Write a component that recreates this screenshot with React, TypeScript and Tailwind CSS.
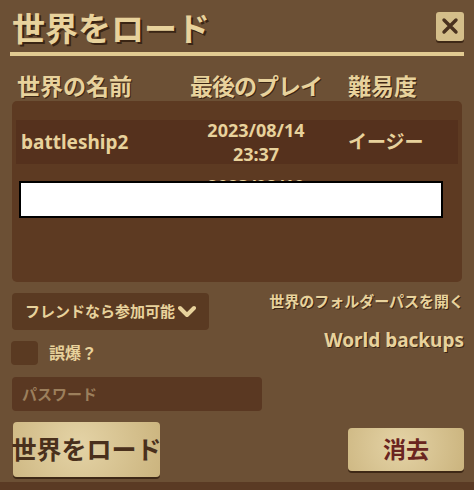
import React from 'react'

const font = { fontFamily: '"Noto Sans", "Noto Sans CJK JP", sans-serif' }

interface WorldRow {
  name: string
  date: string
  time: string
  difficulty: string
}

const worlds: WorldRow[] = [
  { name: 'battleship2', date: '2023/08/14', time: '23:37', difficulty: 'イージー' },
  { name: 'world', date: '2023/08/10', time: '21:12', difficulty: 'イージー' },
]

function CloseButton() {
  return (
    <button className="w-[28px] h-[29px] rounded-[3px] bg-[#d4be8a] shadow-[0_2px_0_#3e2816] flex items-center justify-center">
      <svg width="18" height="18" viewBox="0 0 18 18">
        <path d="M3 3 L15 15 M15 3 L3 15" stroke="#4a321f" strokeWidth="3.4" strokeLinecap="round" />
      </svg>
    </button>
  )
}

function Row({ world, highlight }: { world: WorldRow; highlight?: boolean }) {
  return (
    <div className={`flex items-center h-[44px] px-[5px] ${highlight ? 'bg-[#55311d]' : ''}`}>
      <div className="w-[165px] text-[19px] font-bold">{world.name}</div>
      <div className="w-[140px] text-center text-[18px] font-bold leading-[24px]">
        <div>{world.date}</div>
        <div>{world.time}</div>
      </div>
      <div className="ml-[22px] text-[19px] font-bold">{world.difficulty}</div>
    </div>
  )
}

export default function App() {
  return (
    <div
      className="w-[474px] h-[490px] bg-[#6c5035] relative overflow-hidden flex flex-col text-[#e8d29c]"
      style={font}
    >
      {/* Title */}
      <div className="flex items-center justify-between pl-[12px] pr-[10px] h-[52px]">
        <h1 className="text-[33px] font-bold leading-none [text-shadow:2px_2px_0_#3a2514] pt-[4px]">世界をロード</h1>
        <CloseButton />
      </div>
      <div className="mx-[10px] h-[4px] bg-[#e2cb92]" />

      {/* Column headers */}
      <div className="flex items-center px-[17px] mt-[15px] h-[30px] text-[23px] font-bold leading-none whitespace-nowrap [text-shadow:1px_1px_0_#3a2514]">
        <div className="w-[169px]">世界の名前</div>
        <div className="w-[140px] text-center tracking-[-1px]">最後のプレイ</div>
        <div className="ml-[22px]">難易度</div>
      </div>

      {/* World list */}
      <div className="mx-[12px] h-[181px] bg-[#5d3a22] rounded-[5px] pt-[19px] px-[4px] overflow-hidden">
        <Row world={worlds[0]} highlight />
        <div className="mt-[12px]">
          <Row world={worlds[1]} />
        </div>
      </div>
      <div className="absolute left-[19px] top-[181px] w-[424px] h-[37px] bg-white border-2 border-black" />

      {/* Options */}
      <div className="flex justify-between pl-[12px] pr-[10px] mt-[9px]">
        <div className="flex flex-col">
          <button className="mt-[2px] w-[197px] h-[37px] bg-[#5a3a22] rounded-[4px] flex items-center pl-[13px] text-[15px] font-bold">
            フレンドなら参加可能
            <svg width="18" height="14" viewBox="0 0 18 14" className="ml-[3px]">
              <path d="M2 3 L9 10 L16 3" stroke="#e8d29c" strokeWidth="4" fill="none" strokeLinejoin="round" strokeLinecap="round" />
            </svg>
          </button>
          <div className="flex items-center mt-[11px]">
            <div className="w-[27px] h-[24px] bg-[#5a3a22] rounded-[4px] -ml-[1px]" />
            <span className="ml-[11px] text-[16px] font-bold">誤爆？</span>
          </div>
          <input
            className="mt-[12px] w-[250px] h-[34px] bg-[#5a3822] rounded-[4px] pl-[10px] text-[15px] font-bold outline-none placeholder:text-[#9c7f5c]"
            placeholder="パスワード"
            style={font}
          />
        </div>
        <div className="flex flex-col items-end">
          <span className="text-[15px] font-bold leading-[20px] [text-shadow:1px_1px_0_#3a2514]">世界のフォルダーパスを開く</span>
          <span className="mt-[16px] text-[19px] font-bold leading-[26px] [text-shadow:1px_1px_0_#3a2514]">World backups</span>
        </div>
      </div>

      {/* Buttons */}
      <div className="flex justify-between items-center pl-[13px] pr-[10px] mt-[11px]">
        <button className="w-[147px] h-[55px] rounded-[4px] bg-[radial-gradient(circle_at_45%_40%,#e4d3a6,#cbb47e)] shadow-[0_2px_0_#3e2816] text-[25px] font-bold text-[#4a301c] flex items-center justify-center whitespace-nowrap">
          世界をロード
        </button>
        <button className="w-[116px] h-[43px] rounded-[4px] bg-[radial-gradient(circle_at_45%_40%,#e4d3a6,#cbb47e)] shadow-[0_2px_0_#3e2816] text-[23px] font-bold text-[#6a2420] flex items-center justify-center">
          消去
        </button>
      </div>

      <div className="absolute left-0 right-0 bottom-0 h-[8px] bg-[#5a3a24]" />
    </div>
  )
}
